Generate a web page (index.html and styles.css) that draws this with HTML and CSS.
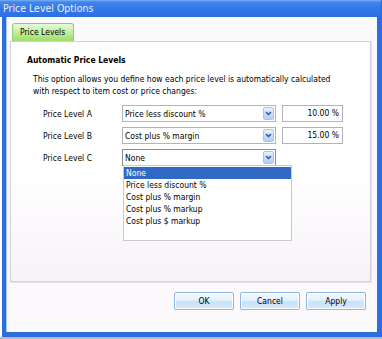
FILE: index.html
```html
<!DOCTYPE html>
<html>
<head>
<meta charset="utf-8">
<link rel="stylesheet" href="styles.css">
</head>
<body>
<div class="window">
  <div class="titlebar">Price Level Options</div>
  <div class="client">
    <div class="tabs"><div class="tab">Price Levels</div></div>
    <div class="panel">
      <div class="heading">Automatic Price Levels</div>
      <div class="desc">This option allows you define how each price level is automatically calculated<br>with respect to item cost or price changes:</div>
      <div class="rows">
        <div class="row">
          <span class="label">Price Level A</span>
          <div class="combo"><span>Price less discount %</span><span class="arrow"><svg width="7" height="5" viewBox="0 0 7 5"><path d="M1 1 L3.5 3.5 L6 1" fill="none" stroke="#2b4f9c" stroke-width="1.4"/></svg></span></div>
          <div class="spin">10.00 %</div>
        </div>
        <div class="row">
          <span class="label">Price Level B</span>
          <div class="combo"><span>Cost plus % margin</span><span class="arrow"><svg width="7" height="5" viewBox="0 0 7 5"><path d="M1 1 L3.5 3.5 L6 1" fill="none" stroke="#2b4f9c" stroke-width="1.4"/></svg></span></div>
          <div class="spin">15.00 %</div>
        </div>
        <div class="row">
          <span class="label">Price Level C</span>
          <div class="combo focus"><span>None</span><span class="arrow"><svg width="7" height="5" viewBox="0 0 7 5"><path d="M1 1 L3.5 3.5 L6 1" fill="none" stroke="#2b4f9c" stroke-width="1.4"/></svg></span>
            <ul class="list">
              <li class="sel">None</li>
              <li>Price less discount %</li>
              <li>Cost plus % margin</li>
              <li>Cost plus % markup</li>
              <li>Cost plus $ markup</li>
            </ul>
          </div>
        </div>
      </div>
    </div>
    <div class="buttons">
      <button class="btn">OK</button>
      <button class="btn">Cancel</button>
      <button class="btn">Apply</button>
    </div>
  </div>
</div>
</body>
</html>
```

FILE: styles.css
```css
html, body {
  margin: 0;
  padding: 0;
  background: #ffffff;
}
body {
  font-family: "DejaVu Sans Condensed", "DejaVu Sans", sans-serif;
  font-size: 8.5px;
  color: #000;
}
.window {
  width: 382px;
  height: 339px;
  box-sizing: border-box;
  display: flex;
  flex-direction: column;
  border-bottom: 2px solid #b9bcc8;
}
.titlebar {
  height: 17px;
  box-sizing: border-box;
  padding-left: 3px;
  line-height: 17px;
  font-size: 10.5px;
  color: #e6efff;
  background: linear-gradient(to bottom, #7eb0f4 0px, #3f86ec 2px, #3479e8 8px, #2c6fe2 17px);
  border-right: 1px solid #2a6ad8;
}
.client {
  flex: 1;
  display: flex;
  flex-direction: column;
  margin-left: 2px;
  border-left: 4px solid #2c6fdc;
  border-right: 5px solid #2c6fdc;
  border-bottom: 5px solid #2c6fdc;
  background: #fcf9fd;
  padding: 6px 6px 0 4px;
  box-shadow: inset 1px 0 0 #a9c6f2;
}
.tabs {
  display: flex;
  padding-left: 2px;
}
.tab {
  height: 18px;
  box-sizing: border-box;
  padding: 0 8px 0 7px;
  line-height: 17px;
  border: 1px solid #9cc48a;
  border-bottom: none;
  border-radius: 3px 3px 0 0;
  background: linear-gradient(to bottom, #e9fadb 0%, #c6ef9f 45%, #9ddc6a 100%);
}
.panel {
  height: 241px;
  box-sizing: border-box;
  border: 1px solid #d6ced9;
  box-shadow: 1px 1px 0 #e6dfe9;
  background: linear-gradient(to bottom, #ffffff 0%, #ffffff 55%, #f7f2f8 100%);
  padding: 12px 0 0 16px;
}
.heading {
  font-weight: bold;
  line-height: 12px;
  margin-bottom: 7px;
}
.desc {
  line-height: 12px;
  padding-left: 6px;
  margin-bottom: 8px;
}
.rows {
  display: flex;
  flex-direction: column;
  gap: 5px;
  padding-left: 16px;
}
.row {
  display: flex;
  align-items: center;
  height: 17px;
}
.label {
  width: 79px;
  flex: none;
}
.combo {
  position: relative;
  width: 154px;
  height: 17px;
  box-sizing: border-box;
  border: 1px solid #b5b2bb;
  background: #fff;
  display: flex;
  align-items: center;
  justify-content: space-between;
  padding: 0 1px 0 2px;
}
.combo.focus {
  border-color: #8c8a92;
}
.arrow {
  width: 11px;
  height: 13px;
  box-sizing: border-box;
  border: 1px solid #a9c4ea;
  border-radius: 2px;
  background: linear-gradient(to bottom, #eaf3ff 0%, #c7dcfa 50%, #b4cff6 100%);
  display: flex;
  align-items: center;
  justify-content: center;
}
.spin {
  margin-left: 6px;
  width: 61px;
  height: 17px;
  box-sizing: border-box;
  border: 1px solid #b5b2bb;
  background: #fff;
  text-align: right;
  line-height: 15px;
  padding-right: 3px;
}
.list {
  position: absolute;
  left: 0;
  top: 15px;
  width: 169px;
  height: 76px;
  box-sizing: border-box;
  margin: 0;
  padding: 1px 0 0 0;
  list-style: none;
  background: #fff;
  border: 1px solid #cbc8d0;
  z-index: 2;
}
.list li {
  height: 12px;
  line-height: 12px;
  padding-left: 2px;
}
.list li.sel {
  background: #316ac5;
  color: #fff;
}
.buttons {
  display: flex;
  justify-content: flex-end;
  gap: 6px;
  margin-top: 10px;
  padding-right: 5px;
}
.btn {
  width: 60px;
  height: 18px;
  box-sizing: border-box;
  margin: 0;
  padding: 0;
  font: inherit;
  color: #000;
  border: 1px solid #8fb3e2;
  border-radius: 2px;
  background: linear-gradient(to bottom, #f6fbff 0%, #e3f0fd 45%, #c9e1fa 55%, #d7eafc 100%);
  box-shadow: inset 0 0 0 1px #ffffff;
}
```
